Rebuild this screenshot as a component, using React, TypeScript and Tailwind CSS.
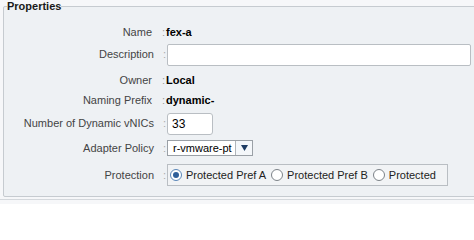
import React from "react";

const font = { fontFamily: '"Liberation Sans", Arial, sans-serif' };

const TextRow = ({ label, value, className = "" }: { label: string; value: string; className?: string }) => (
  <div className={`flex items-center h-[20px] ${className}`}>
    <div className="w-[150px] pr-[2px] text-right text-[#444]">{label}</div>
    <div className="w-[12px] pl-[8px] text-[#999]">:</div>
    <div className="font-bold text-black">{value}</div>
  </div>
);

const FieldRow = ({ label, className = "", children }: { label: string; className?: string; children: React.ReactNode }) => (
  <div className={`flex items-center ${className}`}>
    <div className="w-[150px] text-right text-[#444]">{label}</div>
    <div className="w-[13px] pl-[9px] text-[#aaa]">:</div>
    {children}
  </div>
);

const Radio = ({ checked }: { checked?: boolean }) => (
  <span
    className={`flex items-center justify-center w-[12px] h-[12px] rounded-full border bg-white ${
      checked ? "border-[#5a86b8]" : "border-[#7c8288]"
    }`}
  >
    {checked && <span className="w-[6px] h-[6px] rounded-full bg-[#2f5f9a]" />}
  </span>
);

export default function App() {
  return (
    <div className="w-[474px] h-[204px] overflow-hidden bg-[#f6f7f9] text-[11px]" style={font}>
      <fieldset className="ml-[3px] w-[480px] border border-[#c6cbd0] rounded-[2px] bg-[#eef1f4]">
        <legend className="ml-[3px] text-[11px] leading-[12px] font-bold text-[#1a1a1a]">Properties</legend>
        <div className="pt-[10px] pb-[10px] flex flex-col">
          <TextRow label="Name" value="fex-a" />
          <FieldRow label="Description" className="mt-[1px] h-[23px]">
            <div className="w-[304px] h-[22px] bg-white border border-[#b9bec3] rounded-[2px]" />
          </FieldRow>
          <TextRow label="Owner" value="Local" className="mt-[4px]" />
          <TextRow label="Naming Prefix" value="dynamic-" />
          <FieldRow label="Number of Dynamic vNICs" className="mt-[2px] h-[23px]">
            <div className="w-[46px] h-[22px] bg-white border border-[#b9bec3] rounded-[3px] flex items-center pl-[4px] text-[12px] text-black">
              33
            </div>
          </FieldRow>
          <FieldRow label="Adapter Policy" className="mt-[4px] h-[18px]">
            <div className="flex h-[16px] w-[86px] border border-[#9aa0a6] bg-white">
              <div className="flex-1 flex items-center pl-[5px] text-black">r-vmware-pt</div>
              <div className="w-[17px] border-l border-[#b0b5ba] bg-[#f4f7fa] flex items-center justify-center">
                <svg width="7" height="6" viewBox="0 0 7 6">
                  <path d="M0 0 H7 L3.5 6 Z" fill="#1d3b63" />
                </svg>
              </div>
            </div>
          </FieldRow>
          <FieldRow label="Protection" className="mt-[7px] h-[22px]">
            <div className="flex items-center h-[22px] w-[281px] border border-[#b9bec3] bg-[#f1f3f5] pl-[2px] text-[#222]">
              <Radio checked />
              <span className="ml-[4px]">Protected Pref A</span>
              <span className="ml-[5px]"><Radio /></span>
              <span className="ml-[4px]">Protected Pref B</span>
              <span className="ml-[5px]"><Radio /></span>
              <span className="ml-[4px]">Protected</span>
            </div>
          </FieldRow>
        </div>
      </fieldset>
      <div className="mt-[2px] h-px bg-[#d4d8dc]" />
    </div>
  );
}
